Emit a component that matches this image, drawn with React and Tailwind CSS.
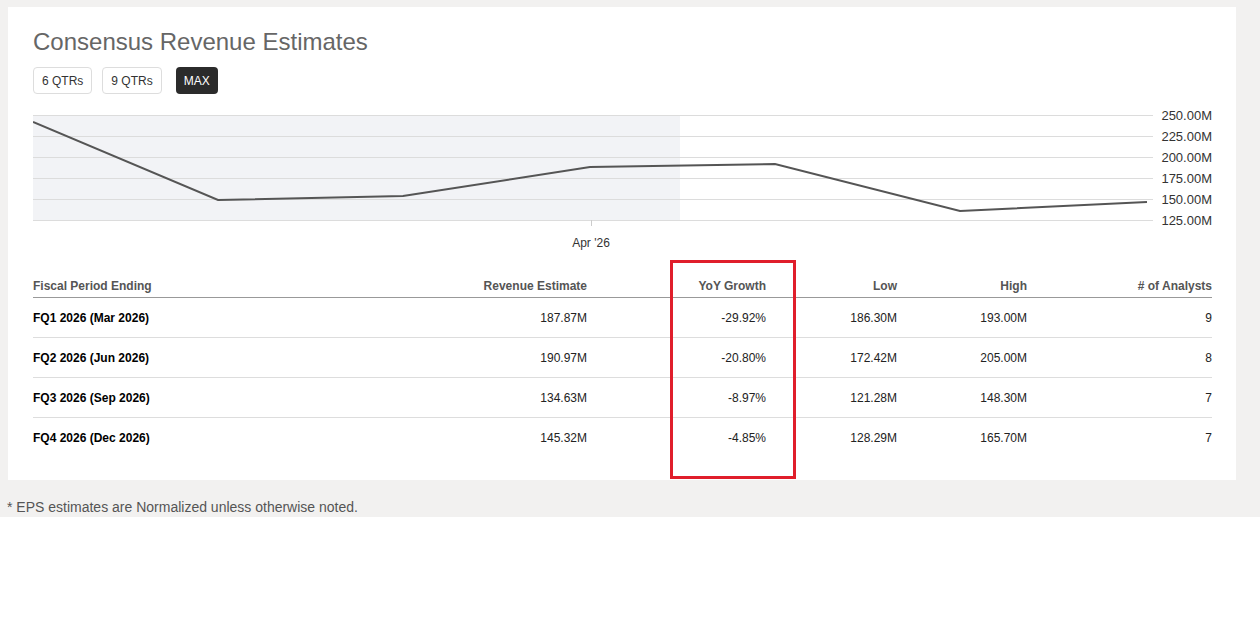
export default function App() {
  const pts = [[0,14],[185,92],[370,88],[557,59],[742,56],[927,103],[1114,94]];
  const grid = [7,28,49,70,91,112];
  const labels = ["250.00M","225.00M","200.00M","175.00M","150.00M","125.00M"];
  const rows = [
    ["FQ1 2026 (Mar 2026)","187.87M","-29.92%","186.30M","193.00M","9"],
    ["FQ2 2026 (Jun 2026)","190.97M","-20.80%","172.42M","205.00M","8"],
    ["FQ3 2026 (Sep 2026)","134.63M","-8.97%","121.28M","148.30M","7"],
    ["FQ4 2026 (Dec 2026)","145.32M","-4.85%","128.29M","165.70M","7"],
  ];
  const cols = "grid grid-cols-[387px_167px_179px_131px_130px_185px]";
  return (
    <div className="w-[1260px] h-[617px] bg-white" style={{fontFamily:'"Liberation Sans", Arial, sans-serif'}}>
      <div className="bg-[#f2f1f0] pt-[7px] pl-[8px] pr-[24px] h-[517px]">
        <div className="relative bg-white h-[473px] pl-[25px] pt-[22px]">
          <div className="text-[24px] leading-[26px] text-[#666]">Consensus Revenue Estimates</div>
          <div className="flex gap-[10px] mt-[12px]">
            <div className="h-[27px] px-[8px] flex items-center text-[12px] text-[#333] border border-[#ddd] rounded-[4px]">6 QTRs</div>
            <div className="h-[27px] px-[8px] flex items-center text-[12px] text-[#333] border border-[#ddd] rounded-[4px]">9 QTRs</div>
            <div className="h-[27px] px-[8px] ml-[4px] flex items-center text-[12px] text-white bg-[#2b2b2b] rounded-[4px]">MAX</div>
          </div>
          <svg width="1195" height="145" className="mt-[14px] block">
            <rect x="0" y="7" width="647" height="105" fill="#f2f3f6" />
            {grid.map((y,i)=>(<line key={i} x1="0" x2="1120" y1={y+0.5} y2={y+0.5} stroke="#dcdcdc" strokeWidth="1" />))}
            {labels.map((l,i)=>(<text key={l} x="1179" y={grid[i]+5} textAnchor="end" fontSize="13" fill="#333" fontFamily='"Liberation Sans", Arial, sans-serif'>{l}</text>))}
            <line x1="558.5" x2="558.5" y1="112" y2="118" stroke="#ccc" />
            <text x="558" y="139" textAnchor="middle" fontSize="12" fill="#333" fontFamily='"Liberation Sans", Arial, sans-serif'>Apr '26</text>
            <polyline points={pts.map(p=>p.join(",")).join(" ")} fill="none" stroke="#555" strokeWidth="2" />
          </svg>
          <div className="w-[1179px] mt-[24px] text-[12px]">
            <div className={`${cols} h-[21px] border-b border-[#999] font-bold text-[#555]`}>
              <div>Fiscal Period Ending</div>
              <div className="text-right">Revenue Estimate</div>
              <div className="text-right">YoY Growth</div>
              <div className="text-right">Low</div>
              <div className="text-right">High</div>
              <div className="text-right"># of Analysts</div>
            </div>
            {rows.map((r,i)=>(
              <div key={i} className={`${cols} h-[40px] items-center text-[#222] ${i<3?"border-b border-[#ddd]":""}`}>
                <div className="font-bold text-black">{r[0]}</div>
                {r.slice(1).map((c,j)=>(<div key={j} className="text-right">{c}</div>))}
              </div>
            ))}
          </div>
          <div className="absolute left-[662px] top-[253px] w-[126px] h-[219px] border-[3px] border-[#e01e2b]" />
        </div>
        <div className="text-[14px] text-[#555] mt-[17px] -ml-[1px]">* EPS estimates are Normalized unless otherwise noted.</div>
      </div>
    </div>
  );
}
